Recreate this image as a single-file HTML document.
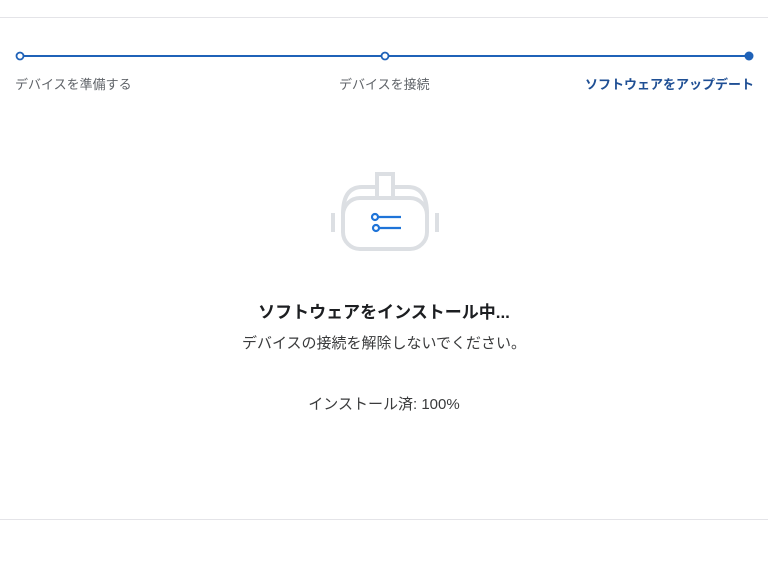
<!DOCTYPE html>
<html><head><meta charset="utf-8"><style>
body{margin:0;width:768px;height:576px;background:#fff;font-family:"Liberation Sans","Noto Sans CJK JP",sans-serif;position:relative;overflow:hidden}
.hr{position:absolute;left:0;width:768px;height:1px;background:#e4e4e8}
.t{position:absolute;white-space:nowrap}
</style></head><body>
<div class="hr" style="top:17px"></div>
<div class="hr" style="top:519px"></div>
<svg style="position:absolute;left:0;top:0" width="768" height="576">
<line x1="24" y1="56" x2="381" y2="56" stroke="#1f62b8" stroke-width="2"/>
<line x1="389" y1="56" x2="745" y2="56" stroke="#1f62b8" stroke-width="2"/>
<circle cx="20" cy="56" r="3.5" fill="#fff" stroke="#1f62b8" stroke-width="1.8"/>
<circle cx="385" cy="56" r="3.5" fill="#fff" stroke="#1f62b8" stroke-width="1.8"/>
<circle cx="749" cy="56" r="4.5" fill="#1f62b8"/>
<g fill="none" stroke="#dcdfe3" stroke-width="4">
<path d="M377 197 V174 H393 V197"/>
<path d="M377 187 H362 Q343 187 343 214"/>
<path d="M393 187 H408 Q427 187 427 214"/>
<rect x="343" y="198" width="84" height="51" rx="17"/>
<line x1="333" y1="213" x2="333" y2="232"/>
<line x1="437" y1="213" x2="437" y2="232"/>
</g>
<g fill="none" stroke="#1f74d8" stroke-width="2.2">
<circle cx="375" cy="217" r="3"/><line x1="378" y1="217" x2="401" y2="217"/>
<circle cx="376" cy="228" r="3"/><line x1="379" y1="228" x2="401" y2="228"/>
</g>
</svg>
<div class="t" style="left:15px;top:74px;font-size:13px;color:#5f6368">デバイスを準備する</div>
<div class="t" style="left:339px;top:74px;font-size:13px;color:#5f6368">デバイスを接続</div>
<div class="t" style="right:14px;top:74px;font-size:13px;color:#1f4f94;font-weight:bold">ソフトウェアをアップデート</div>
<div class="t" style="left:0;width:768px;text-align:center;top:298px;font-size:17px;font-weight:bold;color:#1c1e21">ソフトウェアをインストール中...</div>
<div class="t" style="left:0;width:768px;text-align:center;top:332px;font-size:15px;color:#3a3b3c">デバイスの接続を解除しないでください。</div>
<div class="t" style="left:0;width:768px;text-align:center;top:393px;font-size:15px;color:#3a3b3c">インストール済: 100%</div>
</body></html>
